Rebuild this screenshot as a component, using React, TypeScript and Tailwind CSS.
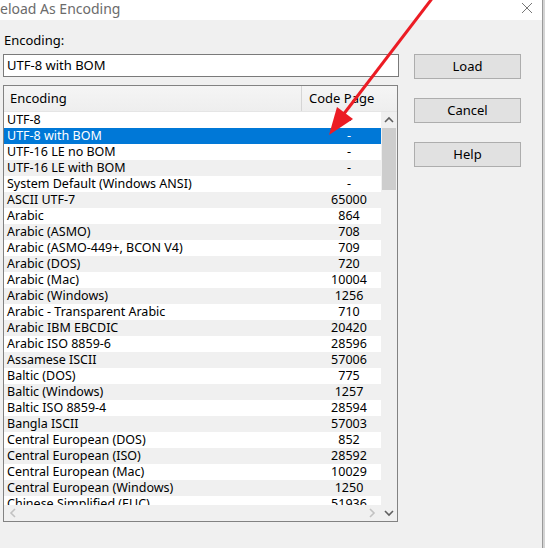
import React from 'react';

const encodings: [string, string][] = [
  ['UTF-8', '-'],
  ['UTF-8 with BOM', '-'],
  ['UTF-16 LE no BOM', '-'],
  ['UTF-16 LE with BOM', '-'],
  ['System Default (Windows ANSI)', '-'],
  ['ASCII UTF-7', '65000'],
  ['Arabic', '864'],
  ['Arabic (ASMO)', '708'],
  ['Arabic (ASMO-449+, BCON V4)', '709'],
  ['Arabic (DOS)', '720'],
  ['Arabic (Mac)', '10004'],
  ['Arabic (Windows)', '1256'],
  ['Arabic - Transparent Arabic', '710'],
  ['Arabic IBM EBCDIC', '20420'],
  ['Arabic ISO 8859-6', '28596'],
  ['Assamese ISCII', '57006'],
  ['Baltic (DOS)', '775'],
  ['Baltic (Windows)', '1257'],
  ['Baltic ISO 8859-4', '28594'],
  ['Bangla ISCII', '57003'],
  ['Central European (DOS)', '852'],
  ['Central European (ISO)', '28592'],
  ['Central European (Mac)', '10029'],
  ['Central European (Windows)', '1250'],
  ['Chinese Simplified (EUC)', '51936'],
];

const Chevron = ({ dir, color }: { dir: 'up' | 'down' | 'left' | 'right'; color: string }) => {
  const paths = {
    up: 'M1 6 L5 2 L9 6',
    down: 'M1 2 L5 6 L9 2',
    left: 'M6 1 L2 5 L6 9',
    right: 'M2 1 L6 5 L2 9',
  };
  const vertical = dir === 'up' || dir === 'down';
  return (
    <svg width={vertical ? 10 : 8} height={vertical ? 8 : 10} viewBox={vertical ? '0 0 10 8' : '0 0 8 10'}>
      <path d={paths[dir]} fill="none" stroke={color} strokeWidth="1.6" />
    </svg>
  );
};

const DialogButton = ({ label }: { label: string }) => (
  <button className="w-[107px] h-[25px] bg-[#e1e1e1] border border-[#adadad] text-[13px] text-black">
    {label}
  </button>
);

export default function App() {
  return (
    <div
      className="relative w-[545px] h-[548px] overflow-hidden bg-[#f0f0f0] flex text-black"
      style={{ fontFamily: '"Noto Sans", "Open Sans", sans-serif' }}
    >
      <div className="flex-1 flex flex-col">
        {/* title bar */}
        <div className="h-[20px] bg-white flex items-start justify-between">
          <span className="mt-[1px] text-[14px] text-[#6b6b6b] leading-[15px]">eload As Encoding</span>
          <svg width="12" height="12" viewBox="0 0 12 12" className="mt-[2px] mr-[9px]">
            <path d="M1 1 L11 11 M11 1 L1 11" stroke="#777" strokeWidth="1" />
          </svg>
        </div>

        <div className="flex">
          {/* left side */}
          <div className="ml-[3px] w-[396px] flex flex-col">
            <div className="mt-[11px] h-[18px] pl-[1px] text-[13px] leading-[18px]">Encoding:</div>
            <div className="mt-[5px] h-[23px] bg-white border border-[#7a7a7a] px-[3px] text-[13px] leading-[21px]">
              UTF-8 with BOM
            </div>

            <div className="mt-[8px] w-[395px] h-[437px] border border-[#828282] bg-white flex flex-col">
              {/* header */}
              <div className="h-[26px] flex bg-[#f0f0f0] border-b border-[#e5e5e5] text-[13px]">
                <div className="w-[298px] pl-[6px] flex items-center border-r border-[#d5d5d5] bg-gradient-to-b from-[#f5f5f5] to-[#eeeeee]">
                  Encoding
                </div>
                <div className="flex-1 pl-[7px] flex items-center bg-gradient-to-b from-[#f5f5f5] to-[#eeeeee]">
                  Code Page
                </div>
              </div>

              <div className="flex flex-1">
                <div className="w-[377px] flex flex-col">
                  <div className="h-[393px] overflow-hidden">
                    {encodings.map(([name, code], i) => {
                      const selected = i === 1;
                      const bg = selected ? 'bg-[#0078d7] text-white' : i % 2 === 1 ? 'bg-[#f0f0f0]' : 'bg-white';
                      return (
                        <div key={name} className={`h-[16px] flex text-[12.5px] leading-[16px] whitespace-nowrap ${bg}`}>
                          <div className="w-[298px] pl-[3px]">{name}</div>
                          <div className="w-[79px] pl-[15px] text-center">{code}</div>
                        </div>
                      );
                    })}
                  </div>
                  {/* horizontal scrollbar */}
                  <div className="h-[16px] bg-[#f0f0f0] flex items-center justify-between px-[5px]">
                    <Chevron dir="left" color="#c2c2c2" />
                    <Chevron dir="right" color="#c2c2c2" />
                  </div>
                </div>

                {/* vertical scrollbar */}
                <div className="w-[16px] bg-[#f0f0f0] flex flex-col">
                  <div className="h-[16px] flex items-center justify-center">
                    <Chevron dir="up" color="#606060" />
                  </div>
                  <div className="mx-[1px] h-[62px] bg-[#cdcdcd]" />
                  <div className="flex-1" />
                  <div className="h-[16px] flex items-center justify-center">
                    <Chevron dir="down" color="#606060" />
                  </div>
                </div>
              </div>
            </div>
          </div>

          {/* buttons */}
          <div className="ml-[15px] pt-[34px] flex flex-col gap-[19px]">
            <DialogButton label="Load" />
            <DialogButton label="Cancel" />
            <DialogButton label="Help" />
          </div>
        </div>
      </div>

      {/* window edge */}
      <div className="w-[3px] bg-[#d4d4d4] border-l border-[#9a9a9a]" />

      {/* annotation arrow */}
      <svg className="absolute inset-0 pointer-events-none" width="545" height="548">
        <line x1="434" y1="-4" x2="343" y2="115" stroke="#ec1c24" strokeWidth="3" />
        <polygon points="329,135 337,107 353,119" fill="#ec1c24" />
      </svg>
    </div>
  );
}
